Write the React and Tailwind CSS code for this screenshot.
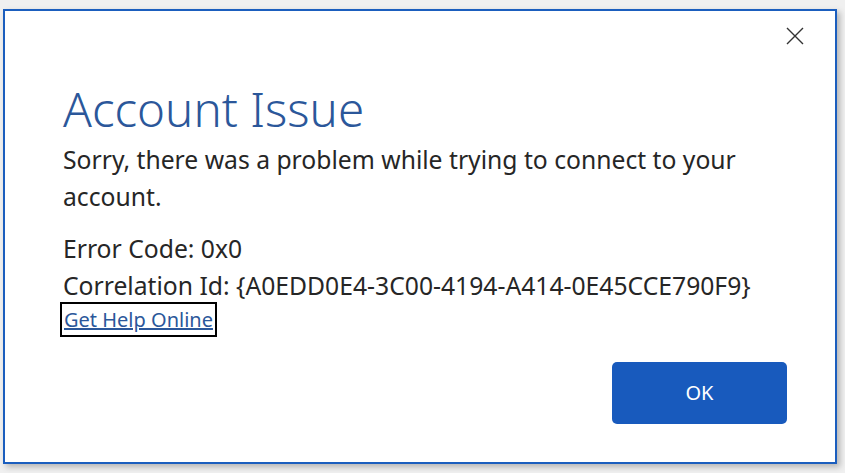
import React from 'react';

function App() {
  return (
    <div
      className="w-[845px] h-[473px] bg-[#f0f0f0] pt-[9px] pl-[3px] overflow-hidden"
      style={{ fontFamily: '"Noto Sans", "Open Sans", sans-serif' }}
    >
      <div className="relative w-[834px] h-[455px] bg-white border-2 border-[#1b5ebe] shadow-[3px_3px_6px_rgba(0,0,0,0.25)]">
        <button className="absolute right-[30px] top-[15px] w-[20px] h-[20px] flex items-center justify-center text-[#333]">
          <svg width="18" height="18" viewBox="0 0 18 18" fill="none" stroke="currentColor" strokeWidth="1.4">
            <path d="M1 1 L17 17 M17 1 L1 17" />
          </svg>
        </button>

        <div className="pl-[58px] pt-[70px]">
          <h1 className="text-[47.5px] leading-[56px] font-light text-[#2b579a]">Account Issue</h1>
          <p className="mt-[4px] text-[24.7px] leading-[37px] text-[#262626] w-[715px]">
            Sorry, there was a problem while trying to connect to your account.
          </p>
          <p className="mt-[15px] text-[24.7px] leading-[37px] text-[#262626]">Error Code: 0x0</p>
          <p className="text-[24.7px] leading-[37px] text-[#262626]">
            Correlation Id: {'{'}A0EDD0E4-3C00-4194-A414-0E45CCE790F9{'}'}
          </p>
          <a
            href="#"
            className="inline-block -ml-[3px] mt-[-2px] px-[2px] border-2 border-black text-[20px] leading-[31px] text-[#2b579a] underline"
          >
            Get Help Online
          </a>
        </div>

        <button className="absolute left-[607px] top-[351px] w-[175px] h-[62px] rounded-[5px] bg-[#185abd] text-white text-[20px]">
          OK
        </button>
      </div>
    </div>
  );
}

export default App;
